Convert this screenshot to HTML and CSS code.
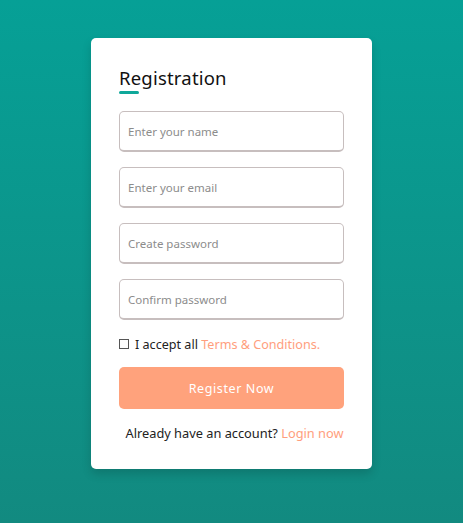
FILE: index.html
```html
<!DOCTYPE html>
<html>
<head>
<meta charset="utf-8">
<link rel="stylesheet" href="styles.css">
</head>
<body>
<div class="wrapper">
  <h2 class="title">Registration</h2>
  <form class="form">
    <div class="field"><input type="text" placeholder="Enter your name"></div>
    <div class="field"><input type="text" placeholder="Enter your email"></div>
    <div class="field"><input type="password" placeholder="Create password"></div>
    <div class="field"><input type="password" placeholder="Confirm password"></div>
    <div class="policy">
      <span class="box"></span>
      <span>I accept all <a class="link">Terms &amp; Conditions.</a></span>
    </div>
    <button type="button" class="btn">Register Now</button>
    <p class="login">Already have an account? <a class="link">Login now</a></p>
  </form>
</div>
</body>
</html>
```
FILE: styles.css
```css
* { box-sizing: border-box; margin: 0; padding: 0; }
html, body { height: 100%; }
body {
  font-family: "Noto Sans", sans-serif;
  background: linear-gradient(180deg, #06a096 0%, #128a80 100%);
  display: flex;
  justify-content: center;
  align-items: flex-start;
}
.wrapper {
  margin-top: 38px;
  width: 281px;
  background: #fff;
  border-radius: 5px;
  padding: 26px 28px 27px;
  box-shadow: 0 5px 10px rgba(0,0,0,0.15);
}
.title {
  position: relative;
  font-size: 18.5px;
  font-weight: 400;
  color: #111;
  line-height: 28px;
  letter-spacing: 0.2px;
}
.title::before {
  content: "";
  position: absolute;
  left: 0;
  bottom: -2px;
  width: 20px;
  height: 3px;
  border-radius: 2px;
  background: #0fa89a;
}
.form { margin-top: 19px; display: flex; flex-direction: column; }
.field { height: 41px; margin-bottom: 15px; }
.field input {
  width: 100%;
  height: 100%;
  border: 1px solid #c7bebe;
  border-bottom-width: 2px;
  border-radius: 5px;
  padding: 0 8px;
  font-family: inherit;
  font-size: 11.5px;
  color: #333;
  outline: none;
}
.field input::placeholder { color: #8c8c8c; }
.policy {
  display: flex;
  align-items: center;
  gap: 6px;
  margin-top: -1px;
  font-size: 12.6px;
  color: #222;
  height: 20px;
}
.box {
  width: 10px;
  height: 10px;
  border: 1px solid #555;
  display: inline-block;
}
.link { color: #ff9e7d; }
.btn {
  margin-top: 13px;
  height: 42px;
  width: 100%;
  border: none;
  border-radius: 5px;
  background: #ffa27c;
  color: #fff;
  font-family: inherit;
  font-size: 12.5px;
  letter-spacing: 0.6px;
}
.login {
  margin-top: 15px;
  text-align: center;
  font-size: 12.8px;
  color: #222;
  padding-left: 6px;
}
```
